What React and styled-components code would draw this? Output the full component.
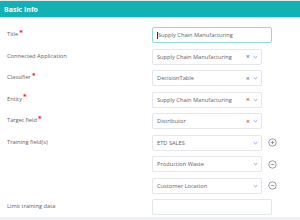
import React from 'react'
import styled, {createGlobalStyle} from 'styled-components'

const teal = '#12b1b3'
const borderGray = '#e4e6ea'
const labelGray = '#5f6368'

const GlobalStyle = createGlobalStyle`
  html, body {
    margin: 0;
    padding: 0;
    background: #eef0f3;
    font-family: 'Open Sans', 'Noto Sans', sans-serif;
  }
`

const Card = styled.section`
  width: 300px;
  border-top: 1px solid #e6e8eb;
  background: white;
`

const Header = styled.h4`
  display: flex;
  align-items: center;
  height: 16px;
  margin: 0;
  border-bottom: 1px solid #a9e3e3;
  padding: 0 4px;

  font: 700 7px/100% 'Open Sans', sans-serif;
  color: white;
  background: ${teal};
`

const Form = styled.div`
  display: flex;
  flex-flow: column;
  gap: 5.5px;
  padding: 9px 0 2px 7px;
`

const Row = styled.div`
  display: grid;
  grid-template-columns: 145px auto;
  align-items: center;
  height: 16px;
`

const Label = styled.label`
  font-size: 5.7px;
  line-height: 100%;
  color: ${labelGray};
`

const Star = styled.span`
  margin-left: 1px;
  font: 700 7px/0 'DejaVu Sans', sans-serif;
  color: #f0141e;
  vertical-align: 1.5px;
`

const Controls = styled.div`
  display: flex;
  align-items: center;
`

const TextBox = styled.div`
  display: flex;
  align-items: center;
  width: 120px;
  height: 16px;
  box-sizing: border-box;
  border: 1px solid ${({$focused}) => ($focused ? '#92d9d9' : borderGray)};
  border-radius: 2px;
  padding-left: 4px;

  font-size: 5.7px;
  color: ${labelGray};

  ${({$focused}) =>
    $focused &&
    `
    &::before {
      content: '';
      width: 0.5px;
      height: 7px;
      margin-right: 0.5px;
      background: #333;
    }
  `}
`

const Select = styled.div`
  display: flex;
  align-items: center;
  width: 110px;
  height: 16px;
  box-sizing: border-box;
  border: 1px solid ${borderGray};
  border-radius: 2px;
  padding: 0 3px 0 4px;

  font-size: 5.7px;
  color: ${labelGray};
`

const Value = styled.span`
  flex: 1;
  white-space: nowrap;
`

const Clear = styled.span`
  margin-right: 3px;
  font: 700 5px/100% 'DejaVu Sans', sans-serif;
  color: #6e7176;
`

const Chevron = styled.svg`
  width: 5px;
  height: 4px;
`

const RoundButton = styled.svg`
  width: 9px;
  height: 9px;
  margin-left: 5.5px;
`

function Required() {
  return <Star>*</Star>
}

function Dropdown({value, clearable = true}) {
  return (
    <Select>
      <Value>{value}</Value>
      {clearable && <Clear>×</Clear>}
      <Chevron viewBox="0 0 5 4">
        <path d="M0.8 1.2 L2.5 2.8 L4.2 1.2" fill="none" stroke="#6c9ce8" strokeWidth="0.9" />
      </Chevron>
    </Select>
  )
}

function AddRemove({add}) {
  return (
    <RoundButton viewBox="0 0 9 9">
      <circle cx="4.5" cy="4.5" r="3.7" fill="none" stroke="#80848a" strokeWidth="0.8" />
      <path d="M2.8 4.5 H6.2" stroke="#80848a" strokeWidth="0.8" />
      {add && <path d="M4.5 2.8 V6.2" stroke="#80848a" strokeWidth="0.8" />}
    </RoundButton>
  )
}

const trainingFields = ['ETD SALES', 'Production Waste', 'Customer Location']

export default function App() {
  return (
    <>
      <GlobalStyle />
      <Card>
        <Header>Basic Info</Header>
        <Form>
          <Row>
            <Label>Title<Required /></Label>
            <TextBox $focused>Supply Chain Manufacturing</TextBox>
          </Row>
          <Row>
            <Label>Connected Application</Label>
            <Dropdown value="Supply Chain Manufacturing" />
          </Row>
          <Row>
            <Label>Classifier<Required /></Label>
            <Dropdown value="DecisionTable" />
          </Row>
          <Row>
            <Label>Entity<Required /></Label>
            <Dropdown value="Supply Chain Manufacturing" />
          </Row>
          <Row>
            <Label>Target field<Required /></Label>
            <Dropdown value="Distributor" />
          </Row>
          {trainingFields.map((field, index) => (
            <Row key={`field-${index}`}>
              <Label>{index === 0 ? 'Training field(s)' : ''}</Label>
              <Controls>
                <Dropdown value={field} clearable={false} />
                <AddRemove add={index === 0} />
              </Controls>
            </Row>
          ))}
          <Row>
            <Label>Limit training data</Label>
            <TextBox />
          </Row>
        </Form>
      </Card>
    </>
  )
}
